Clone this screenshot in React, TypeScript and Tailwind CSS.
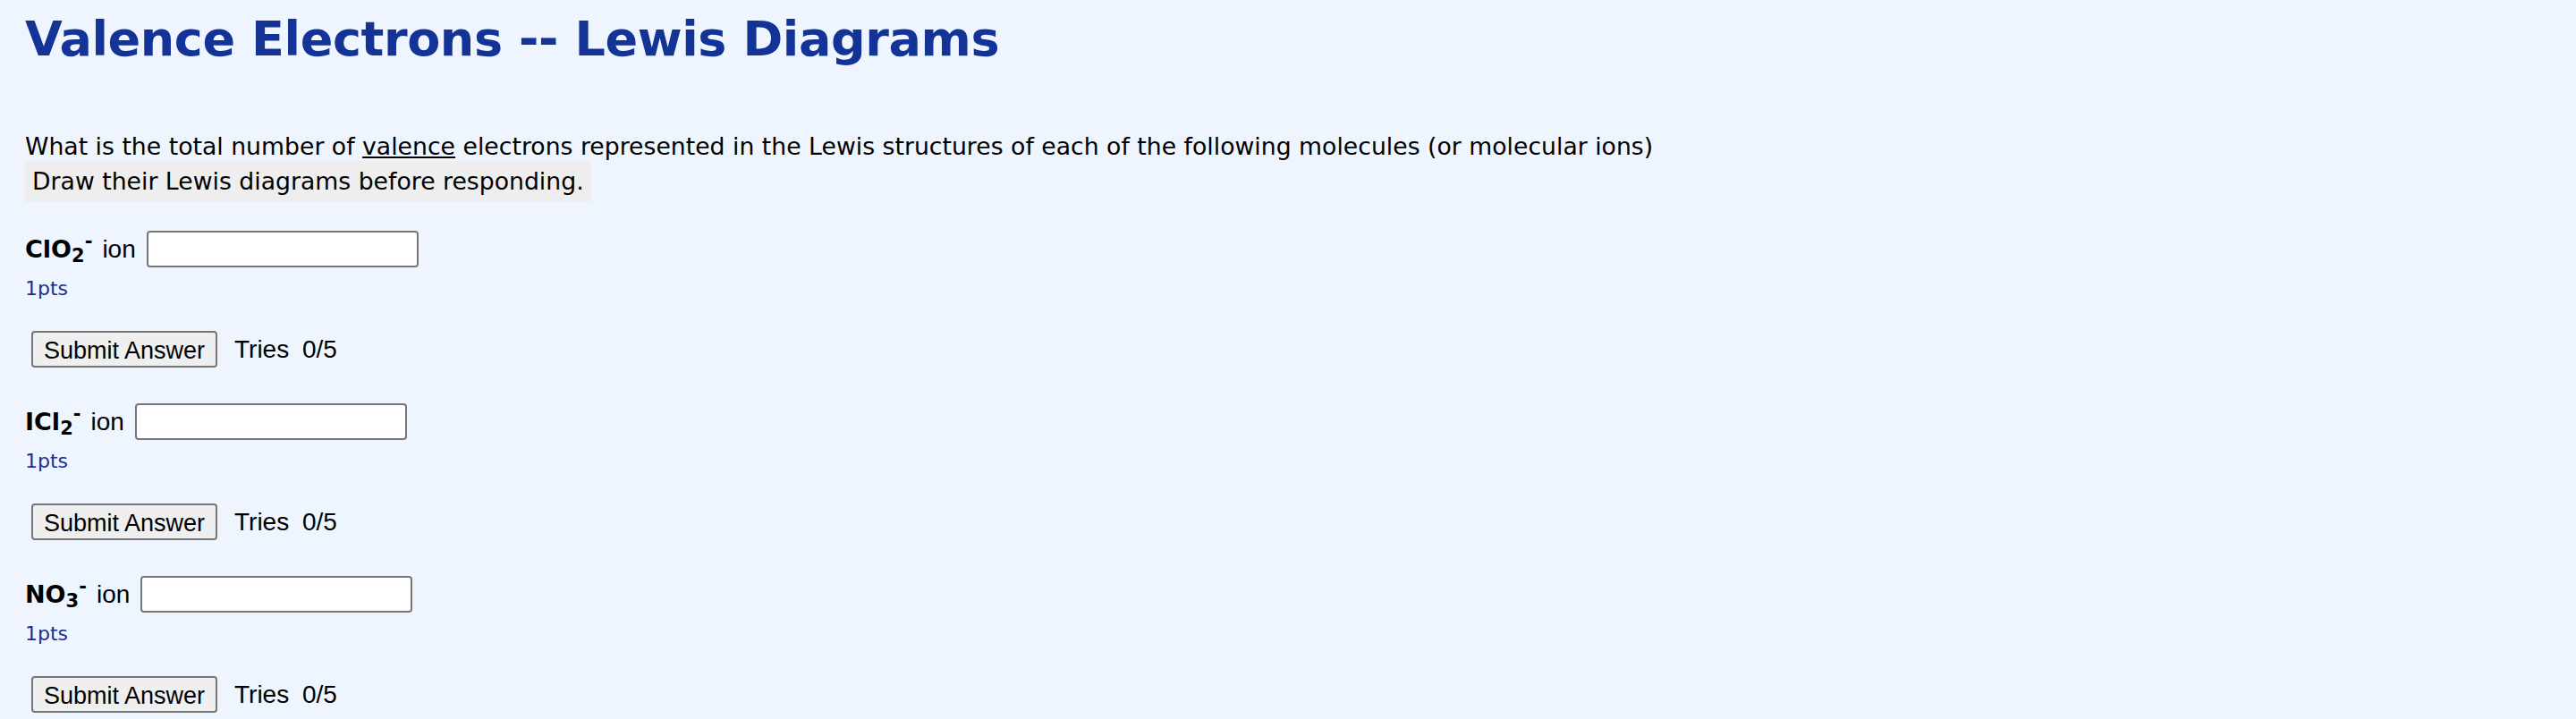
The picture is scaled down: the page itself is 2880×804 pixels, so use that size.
const questions = [
  { id: "clo2", formula: "ClO", sub: "2" },
  { id: "icl2", formula: "ICl", sub: "2" },
  { id: "no3", formula: "NO", sub: "3" },
];

function Question({ formula, sub, first }: { formula: string; sub: string; first: boolean }) {
  return (
    <div className={first ? "mt-[32px]" : "mt-[40px]"}>
      <div className="flex h-[41px] items-center">
        <span className="text-[27px] leading-[32px] font-bold font-['DejaVu_Sans',Verdana,sans-serif] text-black">
          {formula}
          <sub className="text-[21px]">{sub}</sub>
          <sup className="text-[21px]">-</sup>
        </span>
        <span className="ml-[11px] text-[28px] leading-[32px] font-['Liberation_Sans',Arial,sans-serif] text-black">
          ion
        </span>
        <input
          type="text"
          className="ml-[12px] h-[41px] w-[304px] rounded-[4px] border-2 border-[#767676] bg-white px-2 text-[26px] outline-none"
        />
      </div>
      <div className="mt-[11px] text-[22px] leading-[25px] text-[#1a2f8f] font-['DejaVu_Sans',Verdana,sans-serif]">
        1pts
      </div>
      <div className="mt-[35px] flex h-[41px] items-center">
        <button className="ml-[7px] h-[41px] w-[208px] rounded-[4px] border-2 border-[#767676] bg-[#efefef] text-[27px] font-['Liberation_Sans',Arial,sans-serif] text-black">
          Submit Answer
        </button>
        <span className="ml-[19px] text-[28px] [word-spacing:7px] font-['Liberation_Sans',Arial,sans-serif] text-black">
          Tries 0/5
        </span>
      </div>
    </div>
  );
}

export default function App() {
  return (
    <div className="min-h-screen bg-[#eef5ff] pl-[28px] font-['DejaVu_Sans',Verdana,sans-serif] text-black">
      <h1 className="pt-[11px] text-[54px] leading-[66px] font-bold tracking-[-0.4px] text-[#143396]">
        Valence Electrons -- Lewis Diagrams
      </h1>
      <p className="mt-[70px] text-[26.7px] leading-[33px]">
        What is the total number of <u>valence</u> electrons represented in the Lewis structures of each of the
        following molecules (or molecular ions)
      </p>
      <div className="inline-block bg-[#eeeeee] px-2 py-[7px] text-[26.7px] leading-[32px]">
        Draw their Lewis diagrams before responding.
      </div>
      {questions.map((q, i) => (
        <Question key={q.id} formula={q.formula} sub={q.sub} first={i === 0} />
      ))}
    </div>
  );
}
